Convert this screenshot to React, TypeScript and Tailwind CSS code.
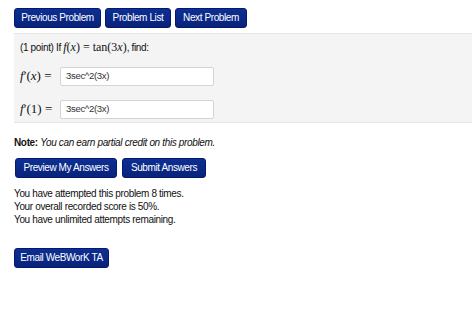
const Btn = ({ children, className = "" }: { children: React.ReactNode; className?: string }) => (
  <button
    className={
      "h-[20px] whitespace-nowrap rounded-[3px] border border-[#06186a] bg-gradient-to-b from-[#0d2f94] to-[#08237a] px-0 text-[10px] leading-none tracking-[-0.4px] text-white " +
      className
    }
  >
    {children}
  </button>
);

const MathI = ({ children, big = false }: { children: React.ReactNode; big?: boolean }) => (
  <span className={"font-['Liberation_Serif',serif] italic tracking-normal " + (big ? "text-[13px]" : "text-[12px]")}>
    {children}
  </span>
);
const MathR = ({ children, big = false }: { children: React.ReactNode; big?: boolean }) => (
  <span className={"font-['Liberation_Serif',serif] tracking-normal " + (big ? "text-[13px]" : "text-[12px]")}>
    {children}
  </span>
);

export default function App() {
  return (
    <div className="h-[312px] w-[474px] bg-white font-['Liberation_Sans',Arial,sans-serif] text-[10px] tracking-[-0.35px] text-[#111]">
      <div className="flex gap-[4px] pl-[14px] pt-[8px]">
        <Btn className="w-[87px]">Previous Problem</Btn>
        <Btn className="w-[66px]">Problem List</Btn>
        <Btn className="w-[72px]">Next Problem</Btn>
      </div>

      <div className="ml-[14px] mr-[2px] mt-[5px] h-[90px] border-y border-[#e6e6e6] bg-[#f4f4f4] pl-[6px] pt-[4px]">
        <div className="flex h-[18px] items-center whitespace-pre">
          (1 point) If{" "}
          <MathI>f</MathI>
          <MathR>(</MathR>
          <MathI>x</MathI>
          <MathR>{") = tan(3"}</MathR>
          <MathI>x</MathI>
          <MathR>)</MathR>, find:
        </div>
        <div className="mt-[10px] flex items-center">
          <div className="w-[40px] whitespace-pre leading-[19px]">
            <MathI big>f</MathI>
            <MathR big>′(</MathR>
            <MathI big>x</MathI>
            <MathR big>) =</MathR>
          </div>
          <div className="flex h-[19px] w-[154px] items-center rounded-[2px] border border-[#d4d4d4] bg-white pl-[5px] text-[9.6px] text-[#333]">
            3sec^2(3x)
          </div>
        </div>
        <div className="mt-[13px] flex items-center">
          <div className="w-[40px] whitespace-pre leading-[19px]">
            <MathI big>f</MathI>
            <MathR big>′(1) =</MathR>
          </div>
          <div className="flex h-[19px] w-[154px] items-center rounded-[2px] border border-[#d4d4d4] bg-white pl-[5px] text-[9.6px] text-[#333]">
            3sec^2(3x)
          </div>
        </div>
      </div>

      <div className="mt-[13px] pl-[14px] leading-[13px]">
        <b>Note:</b> <i>You can earn partial credit on this problem.</i>
      </div>

      <div className="mt-[9px] flex gap-[5px] pl-[15px]">
        <Btn className="w-[102px]">Preview My Answers</Btn>
        <Btn className="w-[84px]">Submit Answers</Btn>
      </div>

      <div className="mt-[9px] pl-[14px] leading-[13px]">
        <div>You have attempted this problem 8 times.</div>
        <div>Your overall recorded score is 50%.</div>
        <div>You have unlimited attempts remaining.</div>
      </div>

      <div className="mt-[22px] pl-[14px]">
        <Btn className="w-[95px]">Email WeBWorK TA</Btn>
      </div>
    </div>
  );
}
